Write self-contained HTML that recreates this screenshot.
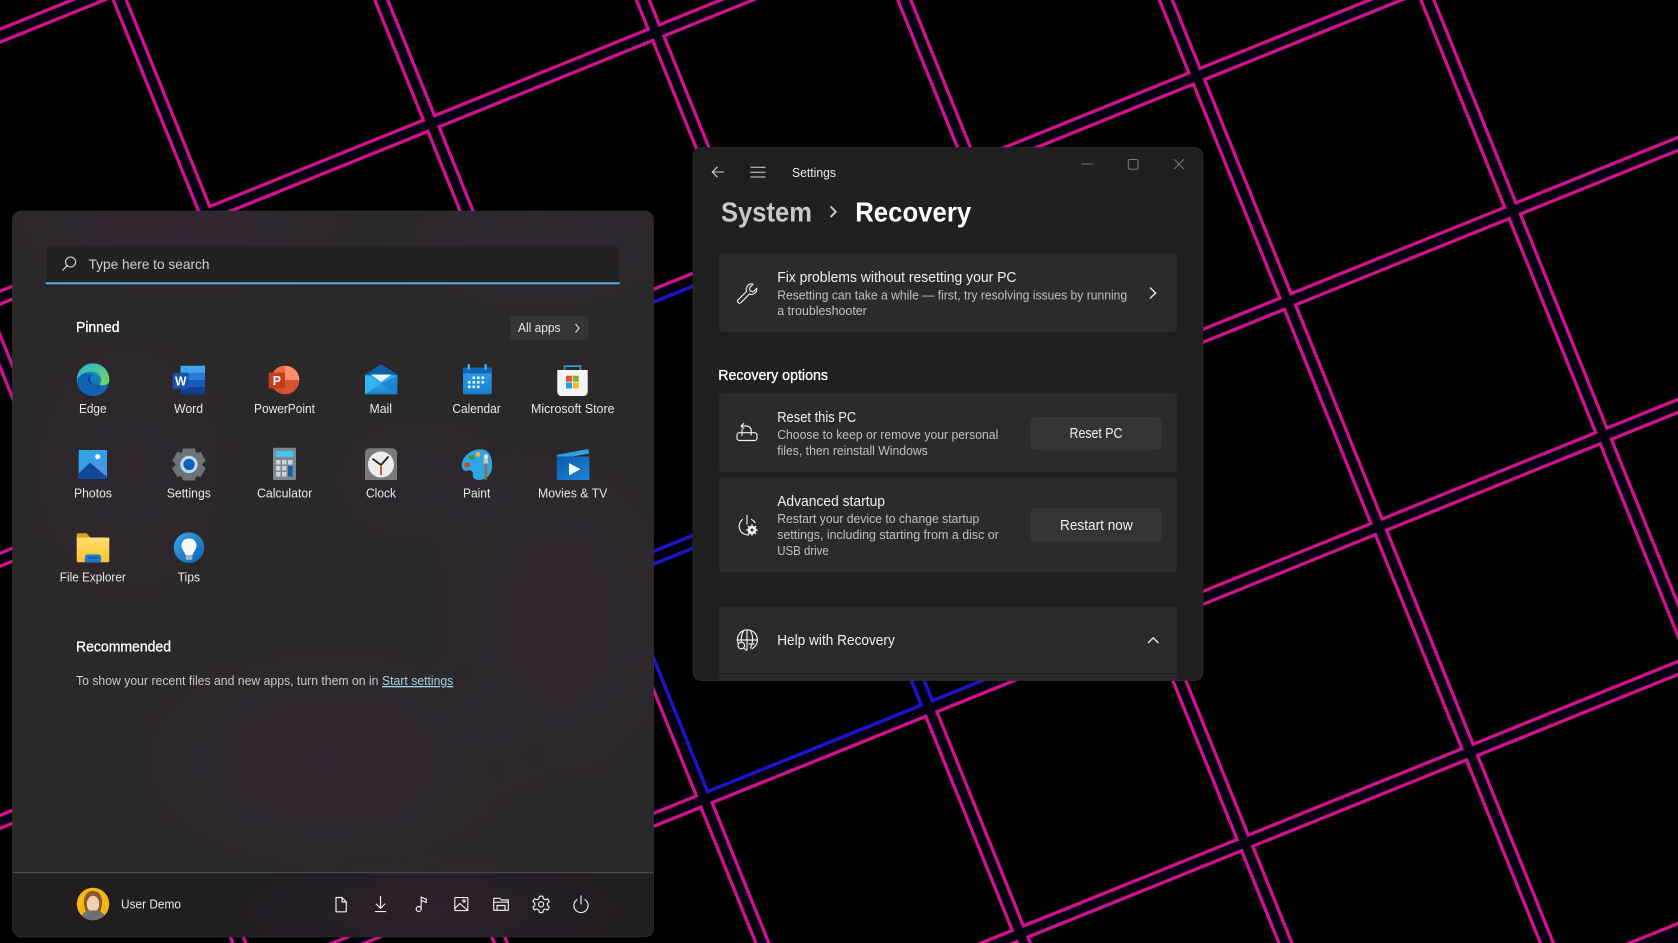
<!DOCTYPE html>
<html lang="en"><head><meta charset="utf-8"><title>Windows 11 Start and Settings</title>
<style>
html,body{margin:0;padding:0;background:#000;width:1678px;height:943px;overflow:hidden}
svg{display:block}
text{font-family:"Liberation Sans",sans-serif;fill:#f0f0f0}
.l{font-size:13px;fill:#e8e8e8}
.d{font-size:13px;fill:#c0c0c0}
.t{font-size:14.5px;fill:#f0f0f0}
.sb{stroke:#fff;stroke-width:.3px;fill:#fff;font-size:15px}
.i{fill:none;stroke:#f0f0f0;stroke-width:1.15;stroke-linecap:round;stroke-linejoin:round}
</style></head><body>
<svg xmlns="http://www.w3.org/2000/svg" width="1678" height="943" viewBox="0 0 1678 943">
<defs>
<radialGradient id="p1"><stop offset="0" stop-color="#4a2346" stop-opacity=".32"/><stop offset="1" stop-color="#4a2346" stop-opacity="0"/></radialGradient>
<radialGradient id="p2"><stop offset="0" stop-color="#3e2a48" stop-opacity=".32"/><stop offset="1" stop-color="#3e2a48" stop-opacity="0"/></radialGradient>
<clipPath id="startclip"><rect x="12.5" y="211" width="641" height="726" rx="9"/></clipPath>
<clipPath id="setclip"><rect x="693" y="147.5" width="510" height="533" rx="8"/></clipPath>
<linearGradient id="edgeB" x1="0" y1="0" x2="0" y2="1"><stop offset="0" stop-color="#1c9ad6"/><stop offset="1" stop-color="#0c5aa8"/></linearGradient>
<linearGradient id="edgeG" x1="0" y1="0" x2="1" y2="1"><stop offset="0" stop-color="#2bb0d0"/><stop offset="1" stop-color="#72dc5c"/></linearGradient>
<linearGradient id="mailG" x1="0" y1="0" x2="0" y2="1"><stop offset="0" stop-color="#35b4ef"/><stop offset="1" stop-color="#1b86cf"/></linearGradient>
<linearGradient id="calG" x1="0" y1="0" x2="0" y2="1"><stop offset="0" stop-color="#2ba3ea"/><stop offset="1" stop-color="#1a80d0"/></linearGradient>
<linearGradient id="phoG" x1="0" y1="0" x2="1" y2="1"><stop offset="0" stop-color="#28a8ea"/><stop offset="1" stop-color="#4b8fe0"/></linearGradient>
<linearGradient id="movG" x1="0" y1="0" x2="1" y2="1"><stop offset="0" stop-color="#0c59a8"/><stop offset="1" stop-color="#1d86d8"/></linearGradient>
<linearGradient id="folG" x1="0" y1="0" x2="0" y2="1"><stop offset="0" stop-color="#ffdf70"/><stop offset="1" stop-color="#f7c22f"/></linearGradient>
<linearGradient id="tipG" x1="0" y1="0" x2="1" y2="1"><stop offset="0" stop-color="#38a9e6"/><stop offset="1" stop-color="#0d5fb0"/></linearGradient>
<g id="r">
<rect x="-1452" width="230" height="230"/><rect x="-1210" width="230" height="230"/><rect x="-968" width="230" height="230"/><rect x="-726" width="230" height="230"/><rect x="-484" width="230" height="230"/><rect x="-242" width="230" height="230"/><rect x="0" width="230" height="230"/><rect x="242" width="230" height="230"/>
</g>
</defs>

<rect width="1678" height="943" fill="#03000f"/>
<g transform="translate(1204.55 79.6) rotate(-22) scale(1.002 1.004)" fill="#000" stroke="#d0128d" stroke-width="3.3">
<use href="#r" y="-726"/><use href="#r" y="-484"/><use href="#r" y="-242"/><use href="#r" y="0"/><use href="#r" y="242"/><use href="#r" y="484"/><use href="#r" y="726"/>
<g stroke="#1a14cf"><rect x="-726" y="0" width="230" height="230"/><rect x="-726" y="242" width="230" height="230"/><rect x="-484" y="242" width="230" height="230"/></g>
</g>

<!-- START PANEL -->
<g clip-path="url(#startclip)">
<rect x="12" y="211" width="642" height="726" fill="#2a2829"/>
<ellipse cx="180" cy="225" rx="190" ry="80" fill="url(#p1)"/>
<ellipse cx="540" cy="240" rx="160" ry="90" fill="url(#p2)"/>
<ellipse cx="130" cy="470" rx="130" ry="170" fill="url(#p1)" opacity=".6"/>
<ellipse cx="330" cy="760" rx="220" ry="130" fill="url(#p1)"/>
<ellipse cx="560" cy="620" rx="140" ry="190" fill="url(#p1)" opacity=".9"/>
<ellipse cx="420" cy="480" rx="150" ry="110" fill="url(#p2)" opacity=".5"/>
<rect x="12" y="873" width="642" height="64" fill="#211e21"/>
<ellipse cx="430" cy="910" rx="190" ry="60" fill="url(#p1)"/>
<rect x="12" y="872" width="642" height="1.2" fill="#4b474b"/>
</g>
<rect x="12.5" y="211" width="641" height="726" rx="9" fill="none" stroke="#39373a" stroke-width=".6"/>

<!-- search -->
<rect x="45.5" y="245" width="574.5" height="39" rx="4" fill="#242124" stroke="#323032" stroke-width=".8"/>
<rect x="45.5" y="282.2" width="574.5" height="2" rx="1" fill="#58acd8"/>
<circle cx="70.6" cy="262" r="5" fill="none" stroke="#d8d8d8" stroke-width="1.1"/>
<line x1="67" y1="265.7" x2="62.5" y2="270.5" stroke="#d8d8d8" stroke-width="1.2"/>
<text x="88.5" y="268.9" font-size="14" textLength="121" lengthAdjust="spacingAndGlyphs" style="fill:#d0d0d0">Type here to search</text>

<text class="sb" x="76" y="332" textLength="43.5" lengthAdjust="spacingAndGlyphs">Pinned</text>
<rect x="510" y="316" width="78.5" height="24" rx="4" fill="#fff" fill-opacity=".06"/>
<text class="l" x="518" y="332" textLength="42.5" lengthAdjust="spacingAndGlyphs">All apps</text>
<polyline points="575.5,324 579,328.2 575.5,332.5" fill="none" stroke="#e6e6e6" stroke-width="1.1"/>

<!-- Edge -->
<circle cx="93" cy="379.7" r="16.3" fill="url(#edgeB)"/>
<path d="M93 363.4A16.3 16.3 0 0 1 109.3 380C109.3 384.5 103.5 386.6 99.3 384.4C103.5 380 100 371.5 91 371.5C85 371.5 80 374.5 77 379C77.5 370 84.5 363.4 93 363.4Z" fill="url(#edgeG)"/>
<path d="M99.3 384.4C94.5 386.5 88 383.5 88 379.3C88 376.5 90.5 374.6 93.5 375C88.5 371 78 373.5 77.8 381.5C77.7 390 85.5 396 93.5 396C99 396 103.5 393.5 106.5 389.5C104 391 101 388 99.3 384.4Z" fill="#0f62b4"/>
<path d="M99.3 384.4C94.5 386.5 88 383.5 88 379.3C88 376.5 90.5 374.6 93.5 375C90.3 375.5 89 378 90.3 381C92 384.5 96 386 99.3 384.4Z" fill="#0a3f80"/>

<!-- Word -->
<rect x="180.5" y="365.7" width="24.5" height="7.2" fill="#41a5ee"/><rect x="180.5" y="372.9" width="24.5" height="7.2" fill="#2b7cd3"/><rect x="180.5" y="380.1" width="24.5" height="7.2" fill="#185abd"/><rect x="180.5" y="387.3" width="24.5" height="7.2" rx="1" fill="#103f91"/>
<rect x="172.7" y="372.7" width="16" height="16" rx="1" fill="#1a52ab"/>
<text x="175" y="385.3" font-size="12.5" font-weight="700" textLength="11.5" lengthAdjust="spacingAndGlyphs" style="fill:#fff">W</text>

<!-- PPT -->
<circle cx="285" cy="380" r="14.3" fill="#d35230"/>
<path d="M285 380V365.7A14.3 14.3 0 0 1 299.3 380Z" fill="#ff8f6b"/>
<path d="M285 380V365.7A14.3 14.3 0 0 0 270.7 380Z" fill="#ed6c47"/>
<rect x="268.7" y="372.5" width="16.3" height="16" rx="1" fill="#c43e1c"/>
<text x="272.7" y="385" font-size="12.5" font-weight="700" textLength="8.2" lengthAdjust="spacingAndGlyphs" style="fill:#fff">P</text>

<!-- Mail -->
<path d="M381 364.3L397.3 374.5V394.3H365V374.5Z" fill="#0f5fa8"/>
<path d="M365 375.3H397.3V393A1.3 1.3 0 0 1 396 394.3H366.3A1.3 1.3 0 0 1 365 393Z" fill="url(#mailG)"/>
<path d="M371 374.5H391.5L381 382Z" fill="#eaf6fd"/>
<path d="M365 375.3L381 384L365 394Z" fill="#3cbcf2" opacity=".7"/>
<path d="M397.3 375.3L381 384L397 394.3Z" fill="#1479c4" opacity=".65"/>

<!-- Calendar -->
<rect x="463" y="367.5" width="28.7" height="26.8" rx="1.5" fill="url(#calG)"/>
<path d="M463 367.5H491.7V373.5H463Z" fill="#0f68b5"/>
<rect x="467.6" y="364" width="2.4" height="6" rx="1.2" fill="#45b4ee"/><rect x="484.4" y="364" width="2.4" height="6" rx="1.2" fill="#45b4ee"/>
<g fill="#e8f6ff"><rect x="472.5" y="376.5" width="2.6" height="2.6"/><rect x="477" y="376.5" width="2.6" height="2.6"/><rect x="481.5" y="376.5" width="2.6" height="2.6"/><rect x="468" y="381" width="2.6" height="2.6"/><rect x="472.5" y="381" width="2.6" height="2.6"/><rect x="477" y="381" width="2.6" height="2.6"/><rect x="481.5" y="381" width="2.6" height="2.6"/><rect x="468" y="385.5" width="2.6" height="2.6"/><rect x="472.5" y="385.5" width="2.6" height="2.6"/><rect x="477" y="385.5" width="2.6" height="2.6"/></g>

<!-- Store -->
<path d="M564.5 370V366.2H580.5V370" fill="none" stroke="#36a3d8" stroke-width="1.6"/>
<path d="M557.3 370H587.7V392A4 4 0 0 1 583.7 396H561.3A4 4 0 0 1 557.3 392Z" fill="#f4f4f4"/>
<rect x="566" y="375.7" width="6" height="6" fill="#e8512b"/><rect x="572.8" y="375.7" width="6" height="6" fill="#7cb32f"/><rect x="566" y="382.5" width="6" height="6" fill="#22a0e0"/><rect x="572.8" y="382.5" width="6" height="6" fill="#f8b81f"/>

<!-- Photos -->
<rect x="78.7" y="450" width="28.3" height="29" fill="url(#phoG)"/>
<circle cx="97.7" cy="456.7" r="2.6" fill="#e8f6ff"/>
<path d="M93 462L107 471V479H96Z" fill="#5a8ee0"/>
<path d="M78.7 473.5L90 462.5L107 477V479H78.7Z" fill="#0f4a9a"/>

<!-- Settings gear -->
<path d="M183.5 449H194.5L196 453.5L200.5 452.5L205 460.5L201.5 464.5L205 468.5L200.5 476.5L196 475.5L194.5 480H183.5L182 475.5L177.5 476.5L172.7 468.5L176.5 464.5L172.7 460.5L177.5 452.5L182 453.5Z" fill="#6d7276" stroke="#6d7276" stroke-linejoin="round"/>
<circle cx="189" cy="464.5" r="8.7" fill="#bcd8ef"/>
<circle cx="189" cy="464.5" r="5.6" fill="#0f5fb5"/>

<!-- Calculator -->
<rect x="273" y="447.7" width="23" height="32.3" rx="1.2" fill="#7b8791"/>
<rect x="275.5" y="451" width="18" height="6" fill="#4ac4ea"/>
<g fill="#d0d3d6"><rect x="276" y="460" width="4.5" height="4.5"/><rect x="282" y="460" width="4.5" height="4.5"/><rect x="288" y="460" width="4.5" height="4.5"/><rect x="276" y="466" width="4.5" height="4.5"/><rect x="282" y="466" width="4.5" height="4.5"/><rect x="276" y="472" width="4.5" height="4.5"/><rect x="282" y="472" width="4.5" height="4.5"/></g>
<rect x="288" y="466" width="4.5" height="10.5" fill="#155fa5"/>

<!-- Clock -->
<path d="M370 448.3H392C395 448.3 397 450.5 397 453V480H365V453C365 450.5 367 448.3 370 448.3Z" fill="#7a7a7a"/>
<circle cx="381" cy="464.5" r="13" fill="#ececec"/>
<path d="M381 465L372.5 458.7M381 465L388.5 456.5" stroke="#1e1e1e" stroke-width="1.8" fill="none"/>
<line x1="381" y1="465" x2="381" y2="475" stroke="#d8431d" stroke-width="1.8"/>

<!-- Paint -->
<path d="M481 449.3C470 449.3 461.7 457.5 461.7 466C461.7 469.5 465 472 468 470.5C471 469.5 473.5 472 472.8 475C472.3 478 475 480 479 480C486 480 491 475 492 468C493 458 489 449.3 481 449.3Z" fill="#2fa5e6"/>
<circle cx="467" cy="465" r="2.6" fill="#c44a2a"/><circle cx="471.5" cy="457.5" r="2.6" fill="#3d9d3b"/><circle cx="478" cy="454.5" r="2.5" fill="#e7b72c"/><circle cx="486" cy="456.5" r="2.2" fill="#e9e5d4"/>
<path d="M485.7 459.5L485.7 480" stroke="#8b6c3a" stroke-width="2.2"/>
<rect x="483.5" y="458.5" width="4.5" height="5" fill="#cfc8b4"/>

<!-- Movies -->
<path d="M556.7 455L588 449L589.3 453.5L558 459Z" fill="#2ea1e4"/>
<rect x="556.7" y="456.5" width="32.6" height="23.5" fill="url(#movG)"/>
<path d="M569 463V475.5L580.5 469.2Z" fill="#eef7fd"/>

<!-- Explorer -->
<path d="M76.7 535A1.7 1.7 0 0 1 78.4 533.3H86.5L90.5 537.5H109.3V540.5H76.7Z" fill="#d79e1d"/>
<rect x="76.7" y="537.5" width="32.6" height="24.8" rx="1.4" fill="url(#folG)"/>
<path d="M85 557A2.5 2.5 0 0 1 87.5 554.5H98.5A2.5 2.5 0 0 1 101 557V562.3H85Z" fill="#1a79cc"/>
<rect x="88.5" y="557.3" width="9" height="1.4" fill="#0e55a0"/>

<!-- Tips -->
<circle cx="189" cy="547.7" r="15.3" fill="url(#tipG)"/>
<path d="M189 538.5C184.5 538.5 181.5 541.5 181.5 545.8C181.5 549.5 184.7 551.5 185.5 555.5H192.5C193.3 551.5 196.5 549.5 196.5 545.8C196.5 541.5 193.5 538.5 189 538.5Z" fill="#f6f8fa"/>
<rect x="185.7" y="556" width="6.6" height="3.8" rx="1.2" fill="#a8b5c0"/>

<!-- labels -->
<text class="l" x="79" y="413" textLength="27.5" lengthAdjust="spacingAndGlyphs">Edge</text>
<text class="l" x="174" y="413" textLength="29" lengthAdjust="spacingAndGlyphs">Word</text>
<text class="l" x="254" y="413" textLength="61" lengthAdjust="spacingAndGlyphs">PowerPoint</text>
<text class="l" x="369.5" y="413" textLength="22.5" lengthAdjust="spacingAndGlyphs">Mail</text>
<text class="l" x="452.4" y="413" textLength="48.4" lengthAdjust="spacingAndGlyphs">Calendar</text>
<text class="l" x="531" y="413" textLength="83.5" lengthAdjust="spacingAndGlyphs">Microsoft Store</text>
<text class="l" x="74" y="497.3" textLength="38" lengthAdjust="spacingAndGlyphs">Photos</text>
<text class="l" x="166.7" y="497.3" textLength="44.2" lengthAdjust="spacingAndGlyphs">Settings</text>
<text class="l" x="257" y="497.3" textLength="55.3" lengthAdjust="spacingAndGlyphs">Calculator</text>
<text class="l" x="366" y="497.3" textLength="30" lengthAdjust="spacingAndGlyphs">Clock</text>
<text class="l" x="463" y="497.3" textLength="27.3" lengthAdjust="spacingAndGlyphs">Paint</text>
<text class="l" x="538" y="497.3" textLength="69.3" lengthAdjust="spacingAndGlyphs">Movies &amp; TV</text>
<text class="l" x="59.8" y="581.3" textLength="66" lengthAdjust="spacingAndGlyphs">File Explorer</text>
<text class="l" x="177.6" y="581.3" textLength="22.4" lengthAdjust="spacingAndGlyphs">Tips</text>

<text class="sb" x="76" y="651.7" textLength="95" lengthAdjust="spacingAndGlyphs">Recommended</text>
<text class="d" x="76" y="685" textLength="302.5" lengthAdjust="spacingAndGlyphs" style="fill:#cacaca">To show your recent files and new apps, turn them on in</text>
<text x="382" y="685" font-size="13" textLength="71.3" lengthAdjust="spacingAndGlyphs" text-decoration="underline" style="fill:#9fd3e8">Start settings</text>

<!-- avatar -->
<circle cx="93" cy="904" r="16.2" fill="#f5b80f"/>
<path d="M84 905C83 896 87 891 93 891C99 891 103 896 102 905L100 913H86Z" fill="#8a5a35"/>
<ellipse cx="93" cy="904" rx="6.2" ry="8.2" fill="#f2cfae"/>
<path d="M81.5 915.5C84 911.5 88 911 90 910.5H96C98 911 102 911.5 104.5 915.5A16.2 16.2 0 0 1 81.5 915.5Z" fill="#6e6f70"/>
<text class="l" x="121" y="908.6" textLength="60" lengthAdjust="spacingAndGlyphs">User Demo</text>

<!-- footer icons -->
<g class="i">
<path d="M336 897.5H342L346.3 902V911.8H336ZM342 897.5V902H346.3"/>
<path d="M380.5 896.5V908M376.2 904L380.5 908.3L384.8 904M375.3 911.6H385.7"/>
<circle cx="418.7" cy="909" r="2.5"/><path d="M421.2 909V897L426.3 899.3V902.5L421.2 900.5"/>
<rect x="454.8" y="897.6" width="13" height="13" rx=".8"/><circle cx="464" cy="901" r="1.1"/><path d="M454.8 908.5L459.8 903.5L467.8 910.5"/>
<path d="M493.7 910.3V898.3H500L501.5 900H508.3V910.3ZM493.7 902.2H508.3M497 905.5H505V910.3H497Z"/>
<path d="M539.5 896.2H542.7L543.4 898.7L545.3 899.7L547.7 898.8L549.3 901.5L547.4 903.3V905.4L549.3 907.2L547.7 909.9L545.3 909L543.4 910L542.7 912.5H539.5L538.8 910L536.9 909L534.5 909.9L532.9 907.2L534.8 905.4V903.3L532.9 901.5L534.5 898.8L536.9 899.7L538.8 898.7Z"/><circle cx="541.1" cy="904.35" r="2.6"/>
<path d="M581 896V904M577 899.6A7.1 7.1 0 1 0 585 899.6"/>
</g>

<!-- SETTINGS WINDOW -->
<rect x="693" y="147.5" width="510" height="533" rx="8" fill="#202020" stroke="#303030" stroke-width=".7"/>
<g clip-path="url(#setclip)">
<rect x="719" y="606.7" width="458" height="74" rx="4" fill="#2b2b2b"/>
<rect x="719" y="673" width="458" height="1" fill="#1d1d1d"/>
</g>
<path d="M712.5 172H724M717.5 166.8L712.3 172L717.5 177.2" fill="none" stroke="#cfcfcf" stroke-width="1.1"/>
<path d="M750.3 167.3H765.5M750.3 172.2H765.5M750.3 177H765.5" fill="none" stroke="#d4d4d4" stroke-width="1"/>
<text x="792" y="176.8" font-size="12.5" textLength="44" lengthAdjust="spacingAndGlyphs" style="fill:#eaeaea">Settings</text>
<path d="M1081.5 164H1092.5" stroke="#6f6f6f" stroke-width="1"/>
<rect x="1128.3" y="159.5" width="9.7" height="9.7" rx="1.5" fill="none" stroke="#7c7c7c" stroke-width="1"/>
<path d="M1174 159.2L1184 169.2M1184 159.2L1174 169.2" stroke="#7c7c7c" stroke-width="1"/>

<text x="721" y="221.7" font-size="28" font-weight="700" textLength="91" lengthAdjust="spacingAndGlyphs" style="fill:#c9c9c9">System</text>
<polyline points="830.7,206.5 835.7,211.7 830.7,217" fill="none" stroke="#cfcfcf" stroke-width="1.9"/>
<text x="855.2" y="221.7" font-size="28" font-weight="700" textLength="116" lengthAdjust="spacingAndGlyphs" style="fill:#fff">Recovery</text>

<!-- card 1 -->
<rect x="719" y="253.3" width="458" height="78.4" rx="4" fill="#2b2b2b"/>
<path class="i" d="M752 283.8A5.6 5.6 0 0 0 746.6 291.4L738.1 299.8A1.9 1.9 0 0 0 740.9 302.6L749.3 294.1A5.6 5.6 0 0 0 756.8 288.3L753.2 291.8L750.2 291L749.4 288L752.9 284.4Z"/>
<text class="t" x="777.2" y="281.8" textLength="239.3" lengthAdjust="spacingAndGlyphs">Fix problems without resetting your PC</text>
<text class="d" x="777.2" y="299.3" textLength="350" lengthAdjust="spacingAndGlyphs">Resetting can take a while — first, try resolving issues by running</text>
<text class="d" x="777.2" y="315" textLength="89.6" lengthAdjust="spacingAndGlyphs">a troubleshooter</text>
<polyline points="1150,287.5 1155.6,293 1150,298.5" fill="none" stroke="#f0f0f0" stroke-width="1.3"/>

<text class="sb" x="718.2" y="380" textLength="109.8" lengthAdjust="spacingAndGlyphs" style="font-size:14.5px">Recovery options</text>

<!-- card 2 -->
<rect x="719" y="392.7" width="458" height="79" rx="4" fill="#2b2b2b"/>
<rect x="737" y="432.7" width="20" height="7.8" rx="2.4" class="i"/>
<path class="i" d="M743.7 423.4L741 426L743.7 428.6M741.2 426H746.5A4.6 4.6 0 0 1 751.2 430.6V435M742 429.5V435.5"/>
<text class="t" x="777.2" y="422" textLength="79.1" lengthAdjust="spacingAndGlyphs">Reset this PC</text>
<text class="d" x="777.2" y="439" textLength="221.1" lengthAdjust="spacingAndGlyphs">Choose to keep or remove your personal</text>
<text class="d" x="777.2" y="455" textLength="150.6" lengthAdjust="spacingAndGlyphs">files, then reinstall Windows</text>
<rect x="1031" y="417.3" width="130" height="32" rx="4" fill="#343434" stroke="#3a3a3a" stroke-width=".7"/>
<text class="t" x="1069.5" y="438" textLength="53" lengthAdjust="spacingAndGlyphs">Reset PC</text>

<!-- card 3 -->
<rect x="719" y="477.3" width="458" height="94.7" rx="4" fill="#2b2b2b"/>
<path class="i" d="M747 515.5V524M742.5 519.5A8.6 8.6 0 0 0 749 534.8M751.5 519.5A8.5 8.5 0 0 1 755 522.5"/>
<circle cx="752" cy="530" r="4.3" fill="#f4f4f4"/><circle cx="752" cy="530" r="1.5" fill="#2b2b2b"/>
<path d="M752 524.4V526.5M752 533.5V535.6M746.4 530H748.5M755.5 530H757.6M748 526L749.5 527.5M754.5 532.5L756 534M756 526L754.5 527.5M749.5 532.5L748 534" stroke="#f4f4f4" stroke-width="1.4"/>
<text class="t" x="777.2" y="506" textLength="107.8" lengthAdjust="spacingAndGlyphs">Advanced startup</text>
<text class="d" x="777.2" y="523" textLength="202.1" lengthAdjust="spacingAndGlyphs">Restart your device to change startup</text>
<text class="d" x="777.2" y="539.2" textLength="221.6" lengthAdjust="spacingAndGlyphs">settings, including starting from a disc or</text>
<text class="d" x="777.2" y="555" textLength="51.6" lengthAdjust="spacingAndGlyphs">USB drive</text>
<rect x="1031" y="509" width="130" height="32" rx="4" fill="#343434" stroke="#3a3a3a" stroke-width=".7"/>
<text class="t" x="1060" y="530" textLength="72.7" lengthAdjust="spacingAndGlyphs">Restart now</text>

<!-- card 4 content -->
<path class="i" d="M738.3 644A10 10 0 1 1 752 648.7M737 640H757M747 630V650M743.5 630.8C741 635 741 640 741.5 642M750.5 630.8C753 635 753.5 642 750.5 648M749 644H754"/>
<circle cx="741.3" cy="645.5" r="3.3" class="i"/><path class="i" d="M743.8 648L746.3 650.3"/>
<text class="t" x="777.2" y="645" textLength="117.6" lengthAdjust="spacingAndGlyphs">Help with Recovery</text>
<polyline points="1148,643 1153.2,637.8 1158.4,643" fill="none" stroke="#f0f0f0" stroke-width="1.3"/>
</svg>
</body></html>
